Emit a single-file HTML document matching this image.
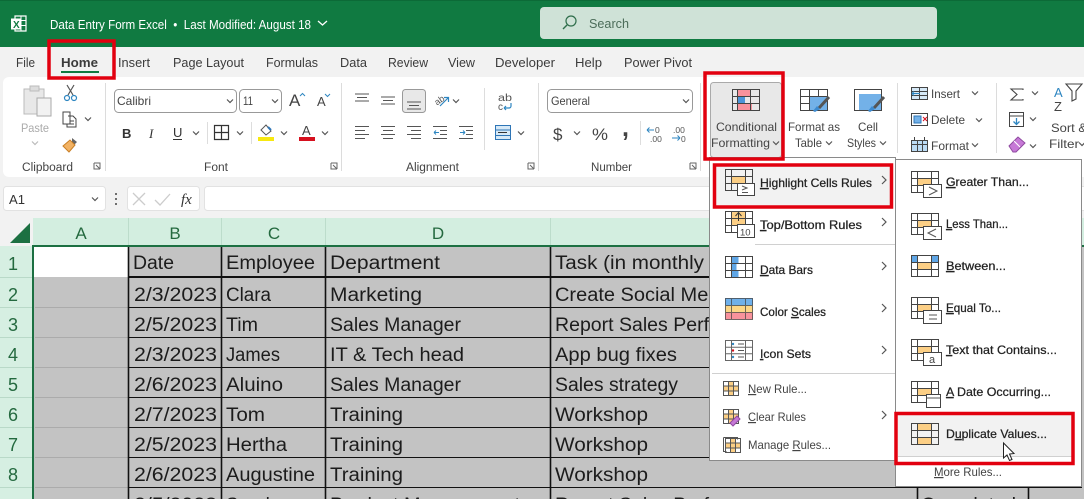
<!DOCTYPE html>
<html><head><meta charset="utf-8"><style>
html,body{margin:0;padding:0;background:#fff;overflow:hidden}
svg{display:block;font-family:"Liberation Sans",sans-serif}
.t{font-size:13px;fill:#fff}
.tab{font-size:13px;fill:#3b3b3b}
.gl{font-size:11.5px;fill:#444}
.r{font-size:12px;fill:#444}
.m{font-size:12px;fill:#222;stroke:#222;stroke-width:.25}
.n{font-size:12px;fill:#444}
.c{font-size:19px;fill:#1c1c1c}
.h{font-size:18px;fill:#24693f;text-anchor:middle}
.ln{fill:none;stroke:#555;stroke-width:1}
.ch{fill:none;stroke:#555;stroke-width:1.2}
.b{fill:none;stroke:#e2000f;stroke-width:3.5}
</style></head><body>
<svg width="1084" height="499" viewBox="0 0 1084 499" xmlns="http://www.w3.org/2000/svg">
<defs>
<path id="cv" d="M-3-1.5 0 1.5 3-1.5" class="ch"/>
<path id="ar" d="M-2-4 2 0-2 4" fill="none" stroke="#555" stroke-width="1.2"/>
<path id="dl" d="M0 0h6v6M2 2l4 4M0 0v6h6" fill="none" stroke="#666" stroke-width="1"/>
<g id="gd"><path d="M.5 .5h27v21H.5zM.5 7.500h27M.5 14.500h27M6.500 .5v21M20.500 .5v21" fill="none" stroke="#444" stroke-width="1"/></g>
<g id="hi"><rect x="6.500" y="7.500" width="14" height="7" fill="#fccf85"/><use href="#gd"/></g>
<g id="mi"><rect x="1" y="5" width="14" height="5" fill="#fccf85"/><rect x="5" y="1" width="6" height="13" fill="#fccf85"/><path d="M.5 .5h15v14H.5zM.5 5h15M.5 10h15M5.500 .5v14M10.500 .5v14" fill="none" stroke="#555"/></g>
</defs>

<!-- background -->
<rect width="1084" height="499" fill="#c3c3c3"/>
<rect width="1084" height="218" fill="#f2f2f2"/>
<!-- title bar -->
<rect width="1084" height="47" fill="#107a41"/>
<rect y="0" width="1084" height="1" fill="#0c6a37"/>
<rect x="540" y="7" width="397" height="32" rx="4" fill="#cfe2d7"/>
<circle cx="571" cy="21" r="5" fill="none" stroke="#2f6e4b" stroke-width="1.2"/><path d="M567 25l-4 4" stroke="#2f6e4b" stroke-width="1.4"/>
<text x="589" y="28" font-size="13" fill="#4c6d5a" textLength="40" lengthAdjust="spacingAndGlyphs">Search</text>
<!-- excel logo -->
<path d="M15 16h11v15H15z" fill="none" stroke="#fff" stroke-width="1.2"/><path d="M20 20.500h6M20 25.500h6M21 16v15" stroke="#fff"/>
<rect x="11" y="18.500" width="10" height="11" fill="#fff"/><text x="13" y="28" font-size="10" font-weight="bold" fill="#107a41">X</text>
<text class="t" x="50" y="29" textLength="261" lengthAdjust="spacingAndGlyphs">Data Entry Form Excel&#160;&#160;•&#160;&#160;Last Modified: August 18</text>
<path d="M318 21l4.500 4 4.500-4" fill="none" stroke="#fff" stroke-width="1.3"/>

<!-- tabs -->
<text class="tab" x="16" y="67" textLength="19" lengthAdjust="spacingAndGlyphs">File</text>
<text class="tab" x="61" y="67" textLength="37" lengthAdjust="spacingAndGlyphs" font-weight="bold" fill="#2a2a2a" style="stroke:none">Home</text>
<rect x="61" y="71" width="38" height="2" fill="#107a41"/>
<text class="tab" x="118" y="67" textLength="32" lengthAdjust="spacingAndGlyphs">Insert</text>
<text class="tab" x="173" y="67" textLength="71" lengthAdjust="spacingAndGlyphs">Page Layout</text>
<text class="tab" x="266" y="67" textLength="52" lengthAdjust="spacingAndGlyphs">Formulas</text>
<text class="tab" x="340" y="67" textLength="27" lengthAdjust="spacingAndGlyphs">Data</text>
<text class="tab" x="388" y="67" textLength="40" lengthAdjust="spacingAndGlyphs">Review</text>
<text class="tab" x="448" y="67" textLength="27" lengthAdjust="spacingAndGlyphs">View</text>
<text class="tab" x="495" y="67" textLength="60" lengthAdjust="spacingAndGlyphs">Developer</text>
<text class="tab" x="575" y="67" textLength="27" lengthAdjust="spacingAndGlyphs">Help</text>
<text class="tab" x="624" y="67" textLength="68" lengthAdjust="spacingAndGlyphs">Power Pivot</text>

<!-- ribbon card -->
<rect x="3" y="77" width="1090" height="100" rx="6" fill="#fff"/>
<path d="M105.500 83v88M341.500 83v88M538.500 83v88M700.500 83v88M897.500 83v70M996.500 83v70" stroke="#dcdcdc"/>
<text class="gl" x="22" y="171" textLength="51" lengthAdjust="spacingAndGlyphs">Clipboard</text>
<text class="gl" x="204" y="171" textLength="24" lengthAdjust="spacingAndGlyphs">Font</text>
<text class="gl" x="406" y="171" textLength="53" lengthAdjust="spacingAndGlyphs">Alignment</text>
<text class="gl" x="591" y="171" textLength="41" lengthAdjust="spacingAndGlyphs">Number</text>
<use href="#dl" x="94" y="163"/><use href="#dl" x="331" y="163"/><use href="#dl" x="528" y="163"/><use href="#dl" x="690" y="163"/>

<!-- clipboard -->
<rect x="24" y="89" width="20" height="25" fill="#e8e8e8" stroke="#bbb"/><rect x="30" y="86" width="9" height="5" fill="#ddd" stroke="#bbb"/>
<rect x="37" y="98" width="14" height="18" fill="#f2f2f2" stroke="#aaa"/>
<text x="21" y="132" font-size="12" fill="#aaa" textLength="28" lengthAdjust="spacingAndGlyphs">Paste</text>
<use href="#cv" x="35" y="143" opacity=".4"/>
<path d="M67 85l6 10M74 85l-6 10" stroke="#555" stroke-width="1.2"/><circle cx="67" cy="98" r="2.500" fill="none" stroke="#2e86c1" stroke-width="1.2"/><circle cx="74" cy="98" r="2.500" fill="none" stroke="#2e86c1" stroke-width="1.2"/>
<path d="M63 112h7v12h-7zM68 116h5l3 3v8h-9v-3" fill="#fff" stroke="#444"/><path d="M70 121h4M70 124h4" stroke="#444"/>
<use href="#cv" x="88" y="119"/>
<path d="M72 138l5 4-5 5z" fill="#666"/><path d="M63 146l7-6 5 5-6 7z" fill="#f2b263" stroke="#c97f25"/>

<!-- font -->
<rect x="114.500" y="89.500" width="122" height="23" rx="4" fill="#fff" stroke="#999"/>
<text class="r" x="117" y="105" textLength="34" lengthAdjust="spacingAndGlyphs">Calibri</text><use href="#cv" x="230" y="101"/>
<rect x="239.500" y="89.500" width="42" height="23" rx="4" fill="#fff" stroke="#999"/>
<text class="r" x="243" y="105" textLength="10" lengthAdjust="spacingAndGlyphs">11</text><use href="#cv" x="275" y="101"/>
<text x="289" y="106" font-size="17" fill="#444">A</text><path d="M300 96l2.500-2.500 2.500 2.500" fill="none" stroke="#2e86c1"/>
<text x="317" y="106" font-size="13" fill="#444">A</text><path d="M325 94l2.500 2.500 2.500-2.500" fill="none" stroke="#2e86c1"/>
<text x="122" y="138" font-size="13" font-weight="bold" fill="#333">B</text>
<text x="149" y="138" font-size="13" font-style="italic" font-family="Liberation Serif" fill="#333">I</text>
<text x="173" y="137" font-size="13" fill="#333">U</text><rect x="173" y="139" width="9" height="1" fill="#333"/>
<use href="#cv" x="196" y="133"/><path d="M207.500 122v22" stroke="#ddd"/>
<path d="M214.500 125.500h14v14h-14zM221.500 125.500v14M214.500 132.500h14" fill="none" stroke="#333" stroke-width="1.2"/>
<use href="#cv" x="240" y="133"/><path d="M251.500 122v22" stroke="#ddd"/>
<path d="M261 130l5-5 5 6-5 4z" fill="#fff" stroke="#555"/><path d="M268 127l3 3" stroke="#2e75b6" stroke-width="2"/><rect x="258" y="137" width="16" height="4" fill="#f7e80f"/>
<use href="#cv" x="284" y="133"/>
<text x="302" y="135" font-size="13" fill="#444">A</text><rect x="299" y="137" width="16" height="4" fill="#d6101e"/>
<use href="#cv" x="325" y="133"/>

<!-- alignment -->
<rect x="402.500" y="89.500" width="23" height="23" rx="3" fill="#e8e8e8" stroke="#999"/>
<path d="M355 94h14M357 97.500h10M355 101h14M381 97h14M383 100.500h10M381 104h14M407 102h14M409 105.500h10M407 109h14" stroke="#555"/>
<path d="M355 126.500h14M355 130.500h10M355 134.500h14M355 138.500h10M381 126.500h14M383 130.500h10M381 134.500h14M383 138.500h10M407 126.500h14M411 130.500h10M407 134.500h14M411 138.500h10M433 126.500h14M440 130.500h7M440 134.500h7M433 138.500h14M459 126.500h14M466 130.500h7M466 134.500h7M459 138.500h14" stroke="#555"/>
<path d="M434 132.500h5M434 132.500l2-2M434 132.500l2 2M460 132.500h5M465 132.500l-2-2M465 132.500l-2 2" stroke="#2e86c1" fill="none"/>
<text x="434" y="104" font-size="9" fill="#555" transform="rotate(-35 438 100)">ab</text><path d="M440 106l8-8M444 97.500h4.500v4.500" stroke="#2e86c1" fill="none" stroke-width="1.2"/>
<use href="#cv" x="456" y="101"/><path d="M484.500 88v62" stroke="#ddd"/>
<text x="498" y="101" font-size="10" fill="#555" textLength="14" lengthAdjust="spacingAndGlyphs">ab</text><text x="498" y="110" font-size="10" fill="#555">c</text>
<path d="M511 103v3a2 2 0 0 1-2 2h-5M504 108l2-2M504 108l2 2" stroke="#2e86c1" fill="none" stroke-width="1.2"/>
<rect x="495.500" y="125.500" width="15" height="14" fill="#d6e9f7" stroke="#2e75b6"/><path d="M495 130h15M495 135.500h15" stroke="#2e75b6"/><path d="M498 132.500h9" stroke="#333"/>
<use href="#cv" x="521" y="133"/>

<!-- number -->
<rect x="547.500" y="89.500" width="145" height="23" rx="4" fill="#fff" stroke="#999"/>
<text class="r" x="551" y="105" textLength="39" lengthAdjust="spacingAndGlyphs">General</text><use href="#cv" x="686" y="101"/>
<text x="553" y="140" font-size="17" fill="#444">$</text><use href="#cv" x="577" y="133"/>
<text x="592" y="140" font-size="17" fill="#444" textLength="16" lengthAdjust="spacingAndGlyphs">%</text>
<text x="622" y="136" font-size="25" font-weight="bold" fill="#444">,</text><path d="M640.500 121v24" stroke="#ddd"/>
<text x="655" y="133" font-size="8.500" fill="#555">0</text><text x="650" y="142" font-size="8.500" fill="#555">.00</text><path d="M647 130h7M647 130l2.500-2.500M647 130l2.500 2.500" stroke="#2e86c1" fill="none"/>
<text x="673" y="133" font-size="8.500" fill="#555">.00</text><text x="681" y="142" font-size="8.500" fill="#555">0</text><path d="M672 138h8M680 138l-2.500-2.500M680 138l-2.500 2.500" stroke="#2e86c1" fill="none"/>

<!-- styles -->
<rect x="710.500" y="82.500" width="71" height="75" rx="3" fill="#e8e8e8" stroke="#aaa"/>
<rect x="737" y="90" width="13" height="7" fill="#f8929c"/><rect x="737" y="97" width="8" height="7" fill="#4c94d8"/><rect x="737" y="104" width="15" height="7" fill="#f8929c"/>
<path d="M732.500 89.500h27v21h-27zM732.500 96.500h27M732.500 103.500h27M737.500 89.500v21M750.500 89.500v21" fill="none" stroke="#444"/>
<text class="r" x="716" y="131" textLength="61" lengthAdjust="spacingAndGlyphs">Conditional</text>
<text class="r" x="711" y="147" textLength="59" lengthAdjust="spacingAndGlyphs">Formatting</text><use href="#cv" x="776" y="143"/>
<path d="M800.500 89.500h27v21h-27zM800.500 96.500h27M800.500 103.500h27M809.500 89.500v21M818.500 89.500v21" fill="none" stroke="#444"/>
<rect x="810" y="97" width="17" height="13" fill="#73b1e8"/><path d="M829 97l-10 11" stroke="#555" stroke-width="3"/><path d="M817 106l3 3-5 3-2-1z" fill="#3c8ad0"/>
<text class="r" x="788" y="131" textLength="52" lengthAdjust="spacingAndGlyphs">Format as</text>
<text class="r" x="795" y="147" textLength="27" lengthAdjust="spacingAndGlyphs">Table</text><use href="#cv" x="829" y="143"/>
<rect x="854.500" y="89.500" width="27" height="21" fill="#fff" stroke="#444"/><rect x="859" y="94" width="22" height="16" fill="#73b1e8"/><path d="M884 97l-10 11" stroke="#555" stroke-width="3"/><path d="M872 106l3 3-5 3-2-1z" fill="#3c8ad0"/>
<text class="r" x="858" y="131" textLength="20" lengthAdjust="spacingAndGlyphs">Cell</text>
<text class="r" x="847" y="147" textLength="29" lengthAdjust="spacingAndGlyphs">Styles</text><use href="#cv" x="883" y="143"/>
<!-- insert/delete/format -->
<path d="M911.500 87.500h16v12h-16zM911.500 91.500h16M911.500 95.500h16M919.500 87.500v12" fill="#d6e9f7" stroke="#444"/><path d="M912 93.500h8M912 93.500l2-2M912 93.500l2 2" stroke="#2e86c1" fill="none"/>
<text class="r" x="931" y="98" textLength="29" lengthAdjust="spacingAndGlyphs">Insert</text><use href="#cv" x="975" y="93"/>
<path d="M911.500 113.500h16v12h-16z" fill="#fff" stroke="#444"/><rect x="914" y="116" width="7" height="7" fill="#73b1e8" stroke="#2e75b6"/><path d="M923 117l4 4M927 117l-4 4" stroke="#d6101e"/>
<text class="r" x="931" y="124" textLength="34" lengthAdjust="spacingAndGlyphs">Delete</text><use href="#cv" x="979" y="120"/>
<path d="M911.500 140.500h16v11h-16z" fill="#bcdcf5" stroke="#444"/><path d="M911.500 144.500h16M917.500 140.500v11M922.500 140.500v11M914.500 137v3M924.500 137v3" stroke="#444" fill="none"/>
<text class="r" x="931" y="150" textLength="38" lengthAdjust="spacingAndGlyphs">Format</text><use href="#cv" x="975" y="145"/>
<!-- editing -->
<path d="M1023 90v-1h-12l6 5.500-6 5.500h12v-1" fill="none" stroke="#444" stroke-width="1.1"/><use href="#cv" x="1035" y="93"/>
<rect x="1009.500" y="112.500" width="14" height="14" fill="#fff" stroke="#444"/><path d="M1009 116h15" stroke="#444"/><path d="M1016.500 118v6M1013.500 121.500l3 3 3-3" stroke="#2e86c1" fill="none" stroke-width="1.3"/>
<use href="#cv" x="1033" y="119"/>
<path d="M1009 146l9-9 7 6-9 9h-3z" fill="#c678d6" stroke="#8f4aa0"/><path d="M1014 141l6 6" stroke="#fff"/><use href="#cv" x="1033" y="146"/>
<text x="1054" y="97" font-size="13" fill="#2e86c1">A</text><text x="1054" y="111" font-size="13" fill="#444">Z</text>
<path d="M1066 84h16l-6 7v8l-4 2v-10z" fill="#fff" stroke="#444" stroke-width="1.1"/>
<text class="r" x="1051" y="132" textLength="36" lengthAdjust="spacingAndGlyphs">Sort &amp;</text>
<text class="r" x="1049" y="148" textLength="30" lengthAdjust="spacingAndGlyphs">Filter</text><use href="#cv" x="1082" y="144"/>

<!-- formula bar -->
<rect x="3.500" y="186.500" width="102" height="24" rx="3" fill="#fff" stroke="#e2e2e2"/>
<text x="9" y="204" font-size="12.500" fill="#333" textLength="16" lengthAdjust="spacingAndGlyphs">A1</text><use href="#cv" x="95" y="199"/>
<circle cx="116" cy="194" r="1" fill="#444"/><circle cx="116" cy="199" r="1" fill="#444"/><circle cx="116" cy="204" r="1" fill="#444"/>
<rect x="127.500" y="186.500" width="72" height="24" rx="3" fill="#fff" stroke="#e2e2e2"/>
<path d="M133 193l12 12M145 193l-12 12M155 200l5 5 10-11" fill="none" stroke="#ccc" stroke-width="1.3"/>
<text x="181" y="204" font-size="15" font-style="italic" font-family="Liberation Serif" fill="#333">fx</text>
<rect x="204.500" y="186.500" width="900" height="24" rx="3" fill="#fff" stroke="#e2e2e2"/>

<!-- headers -->
<rect y="218" width="1084" height="28" fill="#f2f2f2"/>
<rect x="33" y="218" width="1051" height="28" fill="#d3eee0"/>
<rect y="246" width="33" height="253" fill="#d6efe2"/>
<path d="M30 223v20H10z" fill="#1c7042"/>
<path d="M128.500 218v27M221.500 218v27M325.500 218v27M550.500 218v27" stroke="#bcdccb"/>
<text class="h" x="81" y="239" style="font-size:17px">A</text><text class="h" x="175" y="239" style="font-size:17px">B</text><text class="h" x="274" y="239" style="font-size:17px">C</text><text class="h" x="438" y="239" style="font-size:17px">D</text>
<path d="M0 277.500h33M0 307.500h33M0 337.500h33M0 367.500h33M0 397.500h33M0 427.500h33M0 457.500h33M0 487.500h33" stroke="#b9d9c8"/>
<text class="h" x="13" y="270">1</text><text class="h" x="13" y="301">2</text><text class="h" x="13" y="331">3</text><text class="h" x="13" y="361">4</text><text class="h" x="13" y="391">5</text><text class="h" x="13" y="421">6</text><text class="h" x="13" y="451">7</text><text class="h" x="13" y="481">8</text>

<!-- grid -->
<rect x="34" y="247" width="1050" height="252" fill="#c3c3c3"/>
<rect x="34" y="247" width="94" height="30" fill="#fff"/>
<path d="M35 307.500h93M35 337.500h93M35 367.500h93M35 397.500h93M35 427.500h93M35 457.500h93M35 487.500h93" stroke="#ababab"/>
<path d="M128 277.500h954M128 307.500h954M128 337.500h954M128 367.500h954M128 397.500h954M128 427.500h954M128 457.500h954M128 487.500h954" stroke="#111" stroke-width="1"/>
<path d="M128 277h954" stroke="#111" stroke-width="2"/>
<path d="M128.500 247v252M221.500 247v252M325.500 247v252M550.500 247v252M917.500 247v252M1028.500 247v252" stroke="#111" stroke-width="1.6"/>
<rect x="1082" y="247" width="2" height="252" fill="#c3c3c3"/>
<rect x="33" y="245" width="1051" height="2" fill="#1c7042"/>
<rect x="32" y="245" width="2" height="254" fill="#1c7042"/>

<text class="c" x="133" y="269" textLength="41" lengthAdjust="spacingAndGlyphs">Date</text>
<text class="c" x="226" y="269" textLength="89" lengthAdjust="spacingAndGlyphs">Employee</text>
<text class="c" x="330" y="269" textLength="110" lengthAdjust="spacingAndGlyphs">Department</text>
<text class="c" x="555" y="269" textLength="149" lengthAdjust="spacingAndGlyphs">Task (in monthly</text>

<text class="c" x="134" y="301" textLength="83" lengthAdjust="spacingAndGlyphs">2/3/2023</text><text class="c" x="226" y="301" textLength="45" lengthAdjust="spacingAndGlyphs">Clara</text><text class="c" x="330" y="301" textLength="92" lengthAdjust="spacingAndGlyphs">Marketing</text><text class="c" x="555" y="301" textLength="180" lengthAdjust="spacingAndGlyphs">Create Social Media</text>
<text class="c" x="134" y="331" textLength="83" lengthAdjust="spacingAndGlyphs">2/5/2023</text><text class="c" x="226" y="331" textLength="32" lengthAdjust="spacingAndGlyphs">Tim</text><text class="c" x="330" y="331" textLength="131" lengthAdjust="spacingAndGlyphs">Sales Manager</text><text class="c" x="555" y="331" textLength="154" lengthAdjust="spacingAndGlyphs">Report Sales Perf</text>
<text class="c" x="134" y="361" textLength="83" lengthAdjust="spacingAndGlyphs">2/3/2023</text><text class="c" x="226" y="361" textLength="54" lengthAdjust="spacingAndGlyphs">James</text><text class="c" x="330" y="361" textLength="134" lengthAdjust="spacingAndGlyphs">IT &amp; Tech head</text><text class="c" x="555" y="361" textLength="122" lengthAdjust="spacingAndGlyphs">App bug fixes</text>
<text class="c" x="134" y="391" textLength="83" lengthAdjust="spacingAndGlyphs">2/6/2023</text><text class="c" x="226" y="391" textLength="57" lengthAdjust="spacingAndGlyphs">Aluino</text><text class="c" x="330" y="391" textLength="131" lengthAdjust="spacingAndGlyphs">Sales Manager</text><text class="c" x="555" y="391" textLength="123" lengthAdjust="spacingAndGlyphs">Sales strategy</text>
<text class="c" x="134" y="421" textLength="83" lengthAdjust="spacingAndGlyphs">2/7/2023</text><text class="c" x="226" y="421" textLength="39" lengthAdjust="spacingAndGlyphs">Tom</text><text class="c" x="330" y="421" textLength="73" lengthAdjust="spacingAndGlyphs">Training</text><text class="c" x="555" y="421" textLength="93" lengthAdjust="spacingAndGlyphs">Workshop</text>
<text class="c" x="134" y="451" textLength="83" lengthAdjust="spacingAndGlyphs">2/5/2023</text><text class="c" x="226" y="451" textLength="61" lengthAdjust="spacingAndGlyphs">Hertha</text><text class="c" x="330" y="451" textLength="73" lengthAdjust="spacingAndGlyphs">Training</text><text class="c" x="555" y="451" textLength="93" lengthAdjust="spacingAndGlyphs">Workshop</text>
<text class="c" x="134" y="481" textLength="83" lengthAdjust="spacingAndGlyphs">2/6/2023</text><text class="c" x="226" y="481" textLength="89" lengthAdjust="spacingAndGlyphs">Augustine</text><text class="c" x="330" y="481" textLength="73" lengthAdjust="spacingAndGlyphs">Training</text><text class="c" x="555" y="481" textLength="93" lengthAdjust="spacingAndGlyphs">Workshop</text>
<text class="c" x="134" y="511" textLength="83" lengthAdjust="spacingAndGlyphs">2/5/2023</text><text class="c" x="226" y="511" textLength="50" lengthAdjust="spacingAndGlyphs">Sarah</text><text class="c" x="330" y="511" textLength="190" lengthAdjust="spacingAndGlyphs">Product Management</text><text class="c" x="555" y="511" textLength="154" lengthAdjust="spacingAndGlyphs">Report Sales Perf</text><text class="c" x="921" y="511" textLength="95" lengthAdjust="spacingAndGlyphs">Completed</text>

<!-- menu 1 -->
<rect x="709.500" y="157.500" width="186" height="303" fill="#fff" stroke="#8a8a8a"/>
<rect x="713" y="164" width="180" height="43" fill="#f2f2f2"/>
<use href="#hi" x="725" y="169"/><rect x="737.500" y="183.500" width="17" height="12" fill="#fff" stroke="#444"/><path d="M742 186l5 2-5 2M742 192.500h6" fill="none" stroke="#555"/>
<g transform="translate(725 211)"><rect x="6.500" y="0" width="14" height="14.500" fill="#fccf85"/><use href="#gd"/><rect x="12.500" y="13.500" width="17" height="13" fill="#fff" stroke="#444"/><path d="M13.500 10v-8M10.500 5l3-3.500 3 3.500" stroke="#333" fill="none"/><text x="15" y="24.500" font-size="9.500" fill="#444">10</text></g>
<g transform="translate(725 256)"><rect x="6.500" y="0" width="7" height="7.500" fill="#5fa6e6"/><rect x="6.500" y="7.500" width="5" height="7" fill="#5fa6e6"/><rect x="6.500" y="14.500" width="7" height="7" fill="#5fa6e6"/><use href="#gd"/></g>
<g transform="translate(725 298)"><rect width="28" height="7.500" fill="#6fb0ea"/><rect y="7.500" width="28" height="7" fill="#fcd686"/><rect y="14.500" width="28" height="7" fill="#f8929c"/><path d="M.5 .5h27v21H.5zM.5 7.500h27M.5 14.500h27M6.500 .5v21M20.500 .5v21" fill="none" stroke="#444" stroke-opacity=".75"/></g>
<g transform="translate(725 340)"><path d="M.5 .5h27v20H.5zM.5 7.200h27M.5 13.800h27M6.500 .5v20M20.500 .5v20" fill="none" stroke="#666"/><circle cx="8" cy="4" r="1.200" fill="#2e86c1"/><circle cx="8" cy="10.500" r="1.200" fill="#d6101e"/><circle cx="8" cy="17" r="1.200" fill="#2e86c1"/><path d="M13 4h6M13 10.500h6M13 17h6" stroke="#555"/></g>
<text class="m" x="760" y="187" textLength="112" lengthAdjust="spacingAndGlyphs"><tspan text-decoration="underline">H</tspan>ighlight Cells Rules</text>
<text class="m" x="760" y="229" textLength="102" lengthAdjust="spacingAndGlyphs"><tspan text-decoration="underline">T</tspan>op/Bottom Rules</text>
<text class="m" x="760" y="274" textLength="53" lengthAdjust="spacingAndGlyphs"><tspan text-decoration="underline">D</tspan>ata Bars</text>
<text class="m" x="760" y="316" textLength="66" lengthAdjust="spacingAndGlyphs">Color <tspan text-decoration="underline">S</tspan>cales</text>
<text class="m" x="760" y="358" textLength="51" lengthAdjust="spacingAndGlyphs"><tspan text-decoration="underline">I</tspan>con Sets</text>
<use href="#ar" x="884" y="180"/><use href="#ar" x="884" y="222"/><use href="#ar" x="884" y="266"/><use href="#ar" x="884" y="308"/><use href="#ar" x="884" y="350"/><use href="#ar" x="884" y="415"/>
<path d="M755 244.500h140M712 373.500h183" stroke="#d0d0d0"/>
<use href="#mi" x="723" y="381"/><use href="#mi" x="723" y="409"/><path d="M730 423l7-7 3 3-7 7z" fill="#c678d6" stroke="#8f4aa0"/>
<use href="#mi" x="725" y="438"/><path d="M723.500 437.500v14h3M723.500 437.500h14v2" fill="none" stroke="#555"/>
<text class="n" x="748" y="393" textLength="59" lengthAdjust="spacingAndGlyphs"><tspan text-decoration="underline">N</tspan>ew Rule...</text>
<text class="n" x="748" y="421" textLength="58" lengthAdjust="spacingAndGlyphs"><tspan text-decoration="underline">C</tspan>lear Rules</text>
<text class="n" x="748" y="449" textLength="83" lengthAdjust="spacingAndGlyphs">Manage <tspan text-decoration="underline">R</tspan>ules...</text>

<!-- submenu -->
<rect x="895.500" y="159.500" width="186" height="327" fill="#fff" stroke="#8a8a8a"/>
<rect x="898" y="414" width="175" height="43" fill="#f2f2f2"/>
<path d="M898 456.500h175" stroke="#d0d0d0"/>
<use href="#hi" x="911" y="171"/><rect x="923.500" y="184.500" width="18" height="13" fill="#fff" stroke="#444"/><path d="M929 187l8 4-8 4" fill="none" stroke="#555"/>
<use href="#hi" x="911" y="213"/><rect x="923.500" y="226.500" width="18" height="13" fill="#fff" stroke="#444"/><path d="M936 229l-8 4 8 4" fill="none" stroke="#555"/>
<g transform="translate(911 255)"><rect x="0" y="0" width="6.500" height="7.500" fill="#5fa6e6"/><rect x="20.500" y="0" width="7" height="7.500" fill="#5fa6e6"/><rect x="6.500" y="7.500" width="14" height="7" fill="#fccf85"/><use href="#gd"/></g>
<use href="#hi" x="911" y="297"/><rect x="923.500" y="310.500" width="18" height="13" fill="#fff" stroke="#444"/><path d="M929 315h8M929 319h8" stroke="#555"/>
<use href="#hi" x="911" y="339"/><rect x="923.500" y="352.500" width="18" height="13" fill="#fff" stroke="#444"/><text x="929" y="363" font-size="11" fill="#444">a</text>
<use href="#hi" x="911" y="381"/><rect x="926.500" y="394.500" width="14" height="13" fill="#fff" stroke="#444"/><path d="M926 398h15" stroke="#555"/>
<g transform="translate(911 423)"><rect x="6.500" y="0" width="14" height="7.500" fill="#fccf85"/><rect x="6.500" y="14.500" width="14" height="7" fill="#fccf85"/><use href="#gd"/></g>
<text class="m" x="946" y="186" textLength="83" lengthAdjust="spacingAndGlyphs"><tspan text-decoration="underline">G</tspan>reater Than...</text>
<text class="m" x="946" y="228" textLength="62" lengthAdjust="spacingAndGlyphs"><tspan text-decoration="underline">L</tspan>ess Than...</text>
<text class="m" x="946" y="270" textLength="60" lengthAdjust="spacingAndGlyphs"><tspan text-decoration="underline">B</tspan>etween...</text>
<text class="m" x="946" y="312" textLength="55" lengthAdjust="spacingAndGlyphs"><tspan text-decoration="underline">E</tspan>qual To...</text>
<text class="m" x="946" y="354" textLength="111" lengthAdjust="spacingAndGlyphs"><tspan text-decoration="underline">T</tspan>ext that Contains...</text>
<text class="m" x="946" y="396" textLength="105" lengthAdjust="spacingAndGlyphs"><tspan text-decoration="underline">A</tspan> Date Occurring...</text>
<text class="m" x="946" y="438" textLength="101" lengthAdjust="spacingAndGlyphs">D<tspan text-decoration="underline">u</tspan>plicate Values...</text>
<text class="n" x="934" y="476" textLength="68" lengthAdjust="spacingAndGlyphs"><tspan text-decoration="underline">M</tspan>ore Rules...</text>

<!-- red boxes -->
<rect class="b" x="49" y="41" width="65" height="37"/>
<rect class="b" x="705" y="73" width="78" height="86"/>
<rect class="b" x="714.500" y="165" width="177" height="42"/>
<rect class="b" x="896" y="413.500" width="177" height="50"/>

<!-- cursor -->
<path d="M1003.500 443v15l3.500-3 2.500 5.500 2.500-1-2.500-5.500 4.500-.5z" fill="#fff" stroke="#222" stroke-width="1"/>
</svg>
</body></html>
